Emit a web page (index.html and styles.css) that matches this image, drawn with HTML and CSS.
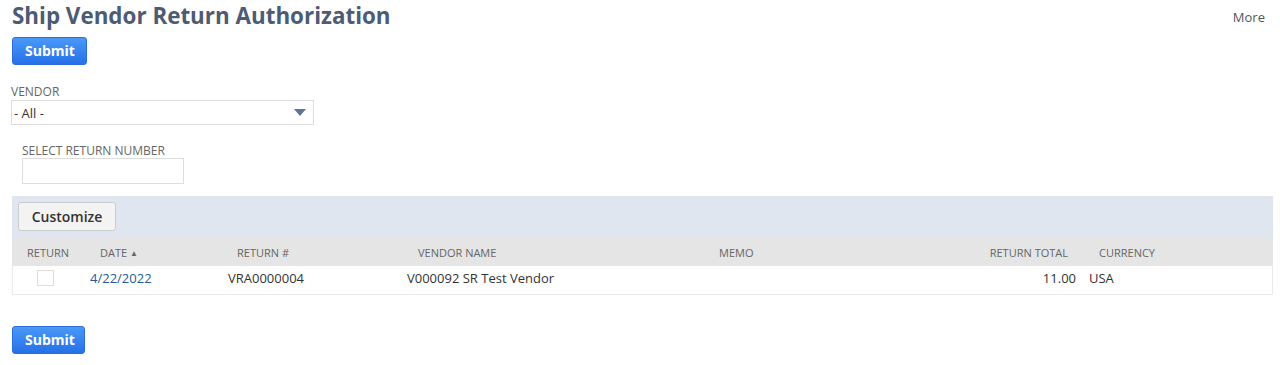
FILE: index.html
```html
<!DOCTYPE html>
<html>
<head>
<meta charset="utf-8">
<link rel="stylesheet" href="styles.css">
</head>
<body>
<div class="page">
  <div class="topbar">
    <h1 class="title">Ship Vendor Return Authorization</h1>
    <span class="more">More</span>
  </div>
  <button class="btn-primary top-submit">Submit</button>

  <div class="field vendor-field">
    <label class="label">VENDOR</label>
    <div class="select">
      <span>- All -</span>
      <svg class="caret" width="12" height="7" viewBox="0 0 12 7"><path d="M0 0 H12 L6 7 Z" fill="#5f7597"/></svg>
    </div>
  </div>

  <div class="field return-field">
    <label class="label">SELECT RETURN NUMBER</label>
    <div class="input"></div>
  </div>

  <div class="list">
    <div class="toolbar">
      <button class="btn-secondary">Customize</button>
    </div>
    <div class="grid header">
      <div class="c1 h">RETURN</div>
      <div class="c2 h">DATE <span class="sort">▲</span></div>
      <div class="c3 h">RETURN #</div>
      <div class="c4 h">VENDOR NAME</div>
      <div class="c5 h">MEMO</div>
      <div class="c6 h">RETURN TOTAL</div>
      <div class="c7 h">CURRENCY</div>
    </div>
    <div class="grid row">
      <div class="c1"><span class="checkbox"></span></div>
      <div class="c2"><a class="link">4/22/2022</a></div>
      <div class="c3">VRA0000004</div>
      <div class="c4">V000092 SR Test Vendor</div>
      <div class="c5"></div>
      <div class="c6">11.00</div>
      <div class="c7">USA</div>
    </div>
  </div>

  <button class="btn-primary bottom-submit">Submit</button>
</div>
</body>
</html>
```

FILE: styles.css
```css
* { box-sizing: border-box; }
html, body { margin: 0; padding: 0; background: #fff; }
body { font-family: "Open Sans", "Liberation Sans", sans-serif; color: #333; }
.page { padding: 0 7px 0 12px; }
.topbar { display: flex; justify-content: space-between; align-items: flex-start; }
.title { margin: 0; padding-top: 1px; font-size: 22.4px; line-height: 30px; font-weight: 700; color: #4d5b73; }
.more { font-size: 13px; color: #555; padding-top: 8px; padding-right: 8px; }
.btn-primary {
  display: block; border: 1px solid #2b6fd6; border-radius: 3px;
  background: linear-gradient(#4a98f7, #2571e8);
  color: #fff; font-family: inherit; font-weight: 700; font-size: 14px;
  height: 28px; padding: 0 12px; line-height: 26px;
}
.top-submit { margin-top: 6px; width: 75px; }
.bottom-submit { margin-top: 31px; width: 73px; }
.field { display: flex; flex-direction: column; }
.label { font-size: 12px; color: #666; line-height: 16px; }
.vendor-field { margin-top: 19px; margin-left: -1px; }
.select {
  width: 303px; height: 25px; border: 1px solid #ddd; display: flex; align-items: center;
  justify-content: space-between; padding: 0 7px 0 2px; font-size: 13px; color: #333;
}
.caret { display: block; }
.return-field { margin-top: 18px; margin-left: 10px; }
.input { width: 162px; height: 26px; border: 1px solid #ddd; margin-top: -1px; }
.list { margin-top: 12px; width: 1261px; }
.toolbar { background: #e0e6ef; height: 42px; padding: 6px 6px; }
.btn-secondary {
  height: 29px; width: 98px; background: #f3f3f3; border: 1px solid #ccc; border-radius: 3px;
  font-family: inherit; font-size: 14px; color: #333; font-weight: 600; padding: 0;
}
.grid { display: grid; grid-template-columns: 73px 138px 167px 314px 177px 202px 190px; }
.header { background: #e5e5e5; height: 28px; font-size: 11px; color: #666; align-items: center; }
.row { height: 29px; font-size: 13px; line-height: 18px; border: 1px solid #eaeaea; border-top: none; align-items: start; padding-top: 3px; }
.h { white-space: nowrap; }
.header .c1 { padding-left: 15px; }
.header .c2 { padding-left: 15px; }
.header .c3 { padding-left: 14px; }
.header .c4 { padding-left: 28px; }
.header .c5 { padding-left: 15px; }
.header .c6 { text-align: right; padding-right: 15px; }
.header .c7 { padding-left: 16px; }
.sort { font-size: 8px; position: relative; top: -1px; }
.row .c1 { padding-left: 24px; }
.row .c2 { padding-left: 4px; }
.row .c3 { padding-left: 4px; }
.row .c4 { padding-left: 16px; }
.row .c6 { text-align: right; padding-right: 8px; }
.row .c7 { padding-left: 5px; }
.checkbox { display: block; width: 17px; height: 16px; border: 1px solid #ddd; background: #fff; margin-top: 1px; }
.link { color: #255a99; text-decoration: none; }
```
